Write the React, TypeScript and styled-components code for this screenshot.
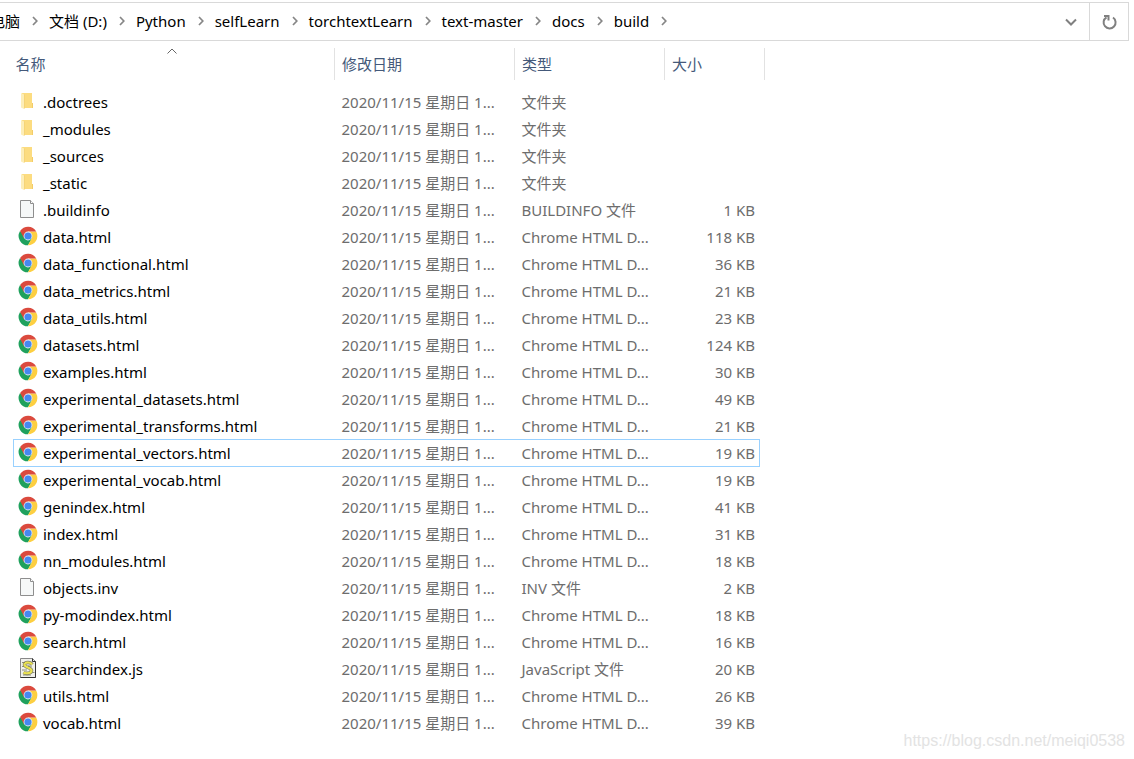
import React from "react";
import styled, { createGlobalStyle } from "styled-components";

type Kind = "folder" | "file" | "chrome" | "script";

interface Entry {
  name: string;
  kind: Kind;
  type: string;
  size?: string;
  selected?: boolean;
}

const MODIFIED = "2020/11/15 星期日 1...";
const CHROME = "Chrome HTML D...";
const FOLDER = "文件夹";

const page = (name: string, kb: number, selected = false): Entry => ({
  name,
  kind: "chrome",
  type: CHROME,
  size: `${kb} KB`,
  selected,
});

const folder = (name: string): Entry => ({ name, kind: "folder", type: FOLDER });

const entries: Entry[] = [
  folder(".doctrees"),
  folder("_modules"),
  folder("_sources"),
  folder("_static"),
  { name: ".buildinfo", kind: "file", type: "BUILDINFO 文件", size: "1 KB" },
  page("data.html", 118),
  page("data_functional.html", 36),
  page("data_metrics.html", 21),
  page("data_utils.html", 23),
  page("datasets.html", 124),
  page("examples.html", 30),
  page("experimental_datasets.html", 49),
  page("experimental_transforms.html", 21),
  page("experimental_vectors.html", 19, true),
  page("experimental_vocab.html", 19),
  page("genindex.html", 41),
  page("index.html", 31),
  page("nn_modules.html", 18),
  { name: "objects.inv", kind: "file", type: "INV 文件", size: "2 KB" },
  page("py-modindex.html", 18),
  page("search.html", 16),
  { name: "searchindex.js", kind: "script", type: "JavaScript 文件", size: "20 KB" },
  page("utils.html", 26),
  page("vocab.html", 39),
];

const crumbs = ["电脑", "文档 (D:)", "Python", "selfLearn", "torchtextLearn", "text-master", "docs", "build"];

const GlobalStyle = createGlobalStyle`
  *, *::before, *::after { box-sizing: border-box; }
  body {
    margin: 0;
    background: #fff;
    color: #000;
    font: 15px/20px "Noto Sans", "Noto Sans CJK SC", sans-serif;
  }
`;

const Window = styled.main`
  position: relative;
  min-height: 100vh;
  padding-top: 2px;
  overflow: hidden;
`;

const AddressBar = styled.header`
  display: flex;
  height: 39px;
  margin-right: 5px;
  border: 1px solid #d9d9d9;
  border-left: 0;
`;

const Path = styled.nav`
  flex: 1;
  min-width: 0;
  overflow: hidden;
`;

const CrumbList = styled.ol`
  display: flex;
  align-items: center;
  height: 100%;
  margin: 0 0 0 -10px;
  padding: 0 0 2px;
  list-style: none;
  white-space: nowrap;
`;

const Crumb = styled.li`
  display: flex;
  align-items: center;
`;

const CrumbLink = styled.a`
  color: #000;
  text-decoration: none;
`;

const CrumbArrow = styled.svg`
  width: 6px;
  height: 10px;
  margin: 0 11px 0 12px;
`;

const BarButton = styled.button<{ $divided?: boolean }>`
  display: flex;
  align-items: center;
  justify-content: center;
  width: ${(p) => (p.$divided ? 39 : 36)}px;
  padding: 0;
  border: 0;
  border-left: ${(p) => (p.$divided ? "1px solid #d9d9d9" : "0")};
  background: none;
`;

const FileTable = styled.table`
  width: 751px;
  margin: 7px 0 0 13px;
  border-collapse: collapse;
  table-layout: fixed;
`;

const Column = styled.col<{ $width: number }>`
  width: ${(p) => p.$width}px;
`;

const HeadCell = styled.th<{ $first?: boolean }>`
  position: relative;
  height: 32px;
  padding: 0 0 0 ${(p) => (p.$first ? 2 : 7)}px;
  border-right: 1px solid #e2e2e2;
  color: #44597a;
  font-weight: 400;
  text-align: left;
`;

const SortMark = styled.svg`
  position: absolute;
  top: 0;
  left: 50%;
  width: 10px;
  height: 6px;
  margin-left: -7px;
`;

const HeadGap = styled.td`
  height: 8px;
  padding: 0;
`;

const Row = styled.tr<{ $selected?: boolean }>`
  & > td {
    border-top: 1px ${(p) => (p.$selected ? "solid #99d1ff" : "dotted transparent")};
    border-bottom: 1px ${(p) => (p.$selected ? "solid #99d1ff" : "dotted transparent")};
  }
  & > td:first-child {
    border-left: 1px ${(p) => (p.$selected ? "solid #99d1ff" : "dotted transparent")};
  }
  & > td:last-child {
    border-right: 1px ${(p) => (p.$selected ? "solid #99d1ff" : "dotted transparent")};
  }
`;

const Cell = styled.td<{ $right?: boolean }>`
  height: 27px;
  padding: 0 ${(p) => (p.$right ? 4 : 0)}px 0 ${(p) => (p.$right ? 0 : 7)}px;
  color: #6d6d6d;
  text-align: ${(p) => (p.$right ? "right" : "left")};
  white-space: nowrap;
`;

const NameCell = styled(Cell)`
  padding-left: 4px;
  color: #000;
`;

const NameBox = styled.div`
  display: flex;
  align-items: center;
  gap: 5px;
`;

const FileIcon = styled.svg`
  flex: none;
  width: 20px;
  height: 20px;
  margin-bottom: 2px;
`;

const Watermark = styled.div`
  position: absolute;
  right: 9px;
  bottom: 8px;
  color: #e3e3e3;
  font: 16px/20px "Liberation Sans", sans-serif;
`;

const Icon = ({ kind }: { kind: Kind }) => {
  if (kind === "folder")
    return (
      <FileIcon viewBox="0 0 20 20" aria-hidden="true">
        <path d="M4 2h10v10h1v5H4z" fill="#fcdc80" />
        <path d="M3 2l3 1.500V18l-3-1.500z" fill="#fdeeb8" />
        <path d="M6.500 3.500V17.500" stroke="#f5d478" />
        <path d="M14.500 12v5" stroke="#f3cc68" />
      </FileIcon>
    );
  if (kind === "chrome")
    return (
      <FileIcon viewBox="0 0 20 20" aria-hidden="true">
        <path d="M10 10 L1.900 5.300 A9.350 9.350 0 0 0 10 19.350 L14 12.300z" fill="#1fa15d" />
        <path d="M10 10 L10 5.500 H18.200 A9.350 9.350 0 0 1 10 19.350 L14 12z" fill="#fdcf41" />
        <path d="M10 10 L6 12.300 L2.100 5.100 A9.350 9.350 0 0 1 18.200 5.500 H10z" fill="#db4a3e" />
        <circle cx="10" cy="10" r="4.400" fill="#e9eef8" />
        <circle cx="10" cy="10" r="3.600" fill="#4688f1" />
      </FileIcon>
    );
  return (
    <FileIcon viewBox="0 0 20 20" aria-hidden="true">
      {kind === "file" ? (
        <>
          <path d="M2.500 1.500h10l3 3v14h-13z" fill="#f6f8f8" stroke="#8e8e8e" />
          <path d="M12.500 1.500v3h3" fill="#fff" stroke="#8e8e8e" />
        </>
      ) : (
        <>
          <path d="M2.500 .5h12l3 3v16h-15z" fill="#f0f0ec" stroke="#888" />
          <path d="M14.500 .5v3h3M2.500 19.500h15v-16" fill="none" stroke="#333" />
          <path
            d="M14 6.500C12.500 3.500 6 4 6.500 7C7 9.500 13.500 9.500 13.500 12.500C13.500 15.500 8 16 5.500 14.500"
            fill="none"
            stroke="#85856a"
            strokeWidth="3.600"
          />
          <path
            d="M14 6.500C12.500 3.500 6 4 6.500 7C7 9.500 13.500 9.500 13.500 12.500C13.500 15.500 8 16 5.500 14.500"
            fill="none"
            stroke="#ebe250"
            strokeWidth="2.200"
          />
          <path d="M4 4.500h3M4 8.500h2M10 8h4M4 12h5M14.500 14.500h2M5 17h8" stroke="#77775c" strokeWidth=".8" />
        </>
      )}
    </FileIcon>
  );
};

export default function App() {
  return (
    <Window>
      <GlobalStyle />
      <AddressBar>
        <Path aria-label="地址">
          <CrumbList>
            {crumbs.map((crumb) => (
              <Crumb key={crumb}>
                <CrumbLink href="#">{crumb}</CrumbLink>
                <CrumbArrow viewBox="0 0 6 10" aria-hidden="true">
                  <path d="M1 1l3.800 4L1 9" fill="none" stroke="#868686" strokeWidth="1.700" />
                </CrumbArrow>
              </Crumb>
            ))}
          </CrumbList>
        </Path>
        <BarButton type="button" aria-label="以前的位置">
          <svg width="12" height="8" viewBox="0 0 12 8" aria-hidden="true">
            <path d="M1 1.500l5 5 5-5" fill="none" stroke="#808080" strokeWidth="2" />
          </svg>
        </BarButton>
        <BarButton type="button" aria-label="刷新" $divided>
          <svg width="16" height="16" viewBox="0 0 16 16" aria-hidden="true">
            <path d="M12 3.500A6 6 0 1 1 5.500 3.300" fill="none" stroke="#808080" strokeWidth="2" />
            <path d="M3 2H7.500v4.500" fill="none" stroke="#808080" strokeWidth="2" />
          </svg>
        </BarButton>
      </AddressBar>
      <FileTable>
        <colgroup>
          <Column $width={321} />
          <Column $width={180} />
          <Column $width={150} />
          <Column $width={95} />
          <Column $width={5} />
        </colgroup>
        <thead>
          <tr>
            <HeadCell $first aria-sort="ascending">
              名称
              <SortMark viewBox="0 0 10 6" aria-hidden="true">
                <path d="M.5 5.500L5 1l4.500 4.500" fill="none" stroke="#666" />
              </SortMark>
            </HeadCell>
            <HeadCell>修改日期</HeadCell>
            <HeadCell>类型</HeadCell>
            <HeadCell colSpan={2}>大小</HeadCell>
          </tr>
        </thead>
        <tbody>
          <tr>
            <HeadGap colSpan={5} />
          </tr>
          {entries.map((entry) => (
            <Row key={entry.name} $selected={entry.selected}>
              <NameCell>
                <NameBox>
                  <Icon kind={entry.kind} />
                  {entry.name}
                </NameBox>
              </NameCell>
              <Cell>{MODIFIED}</Cell>
              <Cell>{entry.type}</Cell>
              <Cell $right>{entry.size}</Cell>
            </Row>
          ))}
        </tbody>
      </FileTable>
      <Watermark>https://blog.csdn.net/meiqi0538</Watermark>
    </Window>
  );
}
